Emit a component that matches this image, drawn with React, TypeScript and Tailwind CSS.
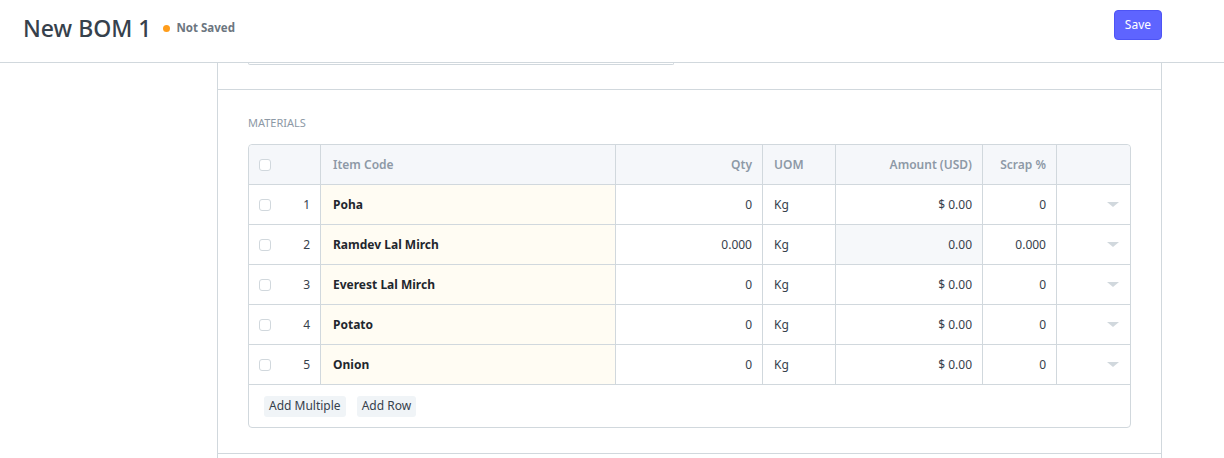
import * as React from 'react';

const rows = [
	{ idx: 1, item: 'Poha', qty: '0', uom: 'Kg', amount: '$ 0.00', scrap: '0', muted: false },
	{ idx: 2, item: 'Ramdev Lal Mirch', qty: '0.000', uom: 'Kg', amount: '0.00', scrap: '0.000', muted: true },
	{ idx: 3, item: 'Everest Lal Mirch', qty: '0', uom: 'Kg', amount: '$ 0.00', scrap: '0', muted: false },
	{ idx: 4, item: 'Potato', qty: '0', uom: 'Kg', amount: '$ 0.00', scrap: '0', muted: false },
	{ idx: 5, item: 'Onion', qty: '0', uom: 'Kg', amount: '$ 0.00', scrap: '0', muted: false },
];

const gridCols = 'grid grid-cols-[72px_295px_147px_73px_147px_74px_1fr]';

const Checkbox = () => (
	<span className="inline-block w-[12px] h-[12px] rounded-[3px] border border-[#d1d8dd] bg-white" />
);

const App: React.FunctionComponent = () => {
	return (
		<div className="w-full h-[458px] overflow-hidden bg-white font-['Noto_Sans',sans-serif] text-[#36414c]">
			<header className="h-[63px] border-b border-[#d1d8dd] flex items-start justify-between pt-[10px] pl-[23px] pr-[62px]">
				<div className="flex items-center h-[30px] mt-[3px]">
					<h1 className="text-[23px] font-medium text-[#36414c] leading-none">New BOM 1</h1>
					<span className="ml-[12px] w-[7px] h-[7px] rounded-full bg-[#ff9d1b]" />
					<span className="ml-[6px] text-[11.5px] font-bold text-[#6c7680]">Not Saved</span>
				</div>
				<button
					type="button"
					className="h-[30px] px-[10px] rounded-[4px] bg-[#5e64ff] border border-[#4d54f5] text-white text-[12px]"
				>
					Save
				</button>
			</header>
			<div className="flex">
				<div className="w-[217px] shrink-0" />
				<div className="w-[945px] border-x border-[#d1d8dd] h-[400px]">
					<div className="h-[27px] border-b border-[#d1d8dd]">
						<div className="ml-[30px] w-[426px] h-[2px] border-b border-x border-[#d1d8dd] rounded-b-[3px]" />
					</div>
					<div className="pt-[27px] pr-[30px] pl-[30px] pb-[25px] border-b border-[#d1d8dd]">
						<div className="text-[11px] text-[#8d99a6] uppercase leading-none mb-[16px]">Materials</div>
						<div className="border border-[#d1d8dd] rounded-[4px] text-[12px]">
							<div className={`${gridCols} h-[40px] bg-[#f5f7fa] border-b border-[#d1d8dd] font-semibold text-[#8d99a6] rounded-t-[4px]`}>
								<div className="flex items-center pl-[10px] border-r border-[#d1d8dd]">
									<Checkbox />
								</div>
								<div className="flex items-center pl-[12px] border-r border-[#d1d8dd]">Item Code</div>
								<div className="flex items-center justify-end pr-[10px] border-r border-[#d1d8dd]">Qty</div>
								<div className="flex items-center pl-[11px] border-r border-[#d1d8dd]">UOM</div>
								<div className="flex items-center justify-end pr-[10px] border-r border-[#d1d8dd]">Amount (USD)</div>
								<div className="flex items-center justify-end pr-[10px] border-r border-[#d1d8dd]">Scrap %</div>
								<div />
							</div>
							{rows.map((row) => (
								<div key={row.idx} className={`${gridCols} h-[40px] border-b border-[#d1d8dd]`}>
									<div className="flex items-center justify-between pl-[10px] pr-[10px] border-r border-[#d1d8dd]">
										<Checkbox />
										<span>{row.idx}</span>
									</div>
									<div className="flex items-center pl-[12px] border-r border-[#d1d8dd] bg-[#fffcf3] font-bold text-[#1f272e]">
										{row.item}
									</div>
									<div className="flex items-center justify-end pr-[10px] border-r border-[#d1d8dd]">{row.qty}</div>
									<div className="flex items-center pl-[11px] border-r border-[#d1d8dd]">{row.uom}</div>
									<div
										className={`flex items-center justify-end pr-[10px] border-r border-[#d1d8dd] ${row.muted ? 'bg-[#f6f8fa]' : ''}`}
									>
										{row.amount}
									</div>
									<div className="flex items-center justify-end pr-[10px] border-r border-[#d1d8dd]">{row.scrap}</div>
									<div className="flex items-center justify-end pr-[11px]">
										<svg width="12" height="6" viewBox="0 0 12 6">
											<path d="M0 0 L12 0 L6 5 Z" fill="#d1d8dd" />
										</svg>
									</div>
								</div>
							))}
							<div className="h-[42px] flex items-center gap-[11px] pl-[15px]">
								<button type="button" className="h-[21px] px-[5px] rounded-[3px] bg-[#f0f4f7] text-[12px] text-[#36414c]">
									Add Multiple
								</button>
								<button type="button" className="h-[21px] px-[5px] rounded-[3px] bg-[#f0f4f7] text-[12px] text-[#36414c]">
									Add Row
								</button>
							</div>
						</div>
					</div>
				</div>
			</div>
		</div>
	);
};

export default App;
